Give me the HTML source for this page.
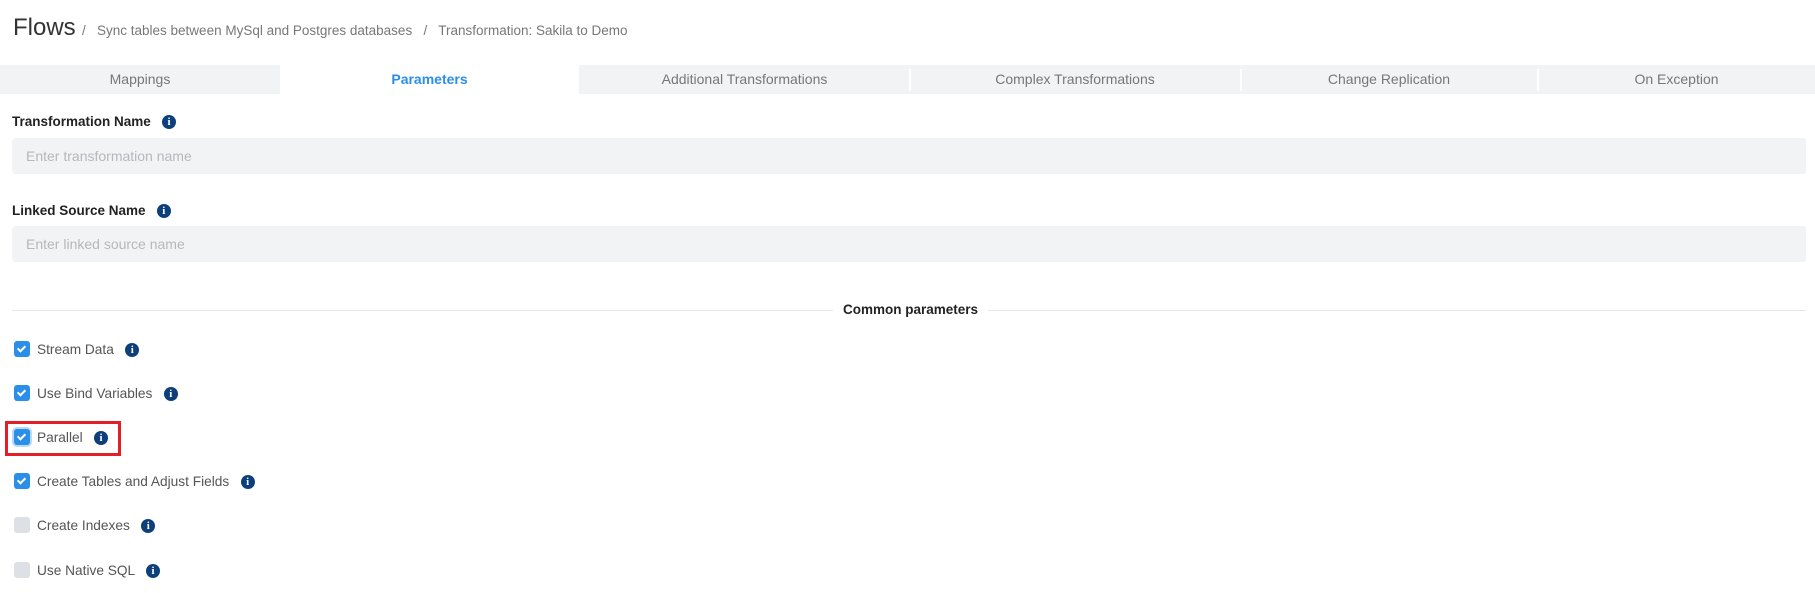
<!DOCTYPE html>
<html><head><meta charset="utf-8"><style>
*{box-sizing:border-box;margin:0;padding:0}
body{width:1815px;height:593px;background:#fff;font-family:"Liberation Sans",sans-serif;position:relative;overflow:hidden;color:#333}
.abs{position:absolute}
.title{left:13px;top:14px;font-size:24px;color:#333;font-weight:300}
.bc{top:23px;font-size:13.5px;color:#777}
.tabs{left:0;top:65px;width:1815px;height:29px;background:#f2f3f5}
.tab{position:absolute;top:0;height:29px;line-height:29px;text-align:center;font-size:14px;color:#777}
.sep{position:absolute;top:4px;width:2px;height:22px;background:#fff}
.lbl{font-size:13.5px;font-weight:bold;color:#222}
.inp{left:12px;width:1794px;height:36px;background:#f2f3f5;border-radius:3px;font-size:14px;color:#b5b8bd;padding-left:14px;line-height:36px}
.info{display:inline-block;width:14px;height:14px;border-radius:50%;background:#0d3f7a;color:#fff;font-size:11px;font-weight:bold;text-align:center;line-height:14px;font-family:"Liberation Serif",serif;vertical-align:1px}
.row{left:14px;height:18px;font-size:13.7px;color:#555;line-height:18px}
.cb{display:inline-block;width:16px;height:16px;border-radius:3px;vertical-align:-3px;margin-right:7px;position:relative}
.on{background:#2b8fe8}
.off{background:#dde0e4}
.on:after{content:"";position:absolute;left:5px;top:3px;width:3px;height:6px;border:solid #fff;border-width:0 2px 2px 0;transform:rotate(45deg)}
</style></head><body>
<div class="abs title">Flows</div>
<div class="abs bc" style="left:82px">/&nbsp;&nbsp; Sync tables between MySql and Postgres databases &nbsp;&nbsp;/&nbsp;&nbsp; Transformation: Sakila to Demo</div>
<div class="abs tabs">
<div class="tab" style="left:0;width:280px">Mappings</div>
<div class="tab" style="left:280px;width:299px;background:#fff;color:#2b8fe8;font-weight:bold">Parameters</div>
<div class="tab" style="left:579px;width:331px">Additional Transformations</div>
<div class="sep" style="left:909px"></div>
<div class="tab" style="left:910px;width:330px">Complex Transformations</div>
<div class="sep" style="left:1240px"></div>
<div class="tab" style="left:1241px;width:296px">Change Replication</div>
<div class="sep" style="left:1537px"></div>
<div class="tab" style="left:1538px;width:277px">On Exception</div>
</div>
<div class="abs lbl" style="left:12px;top:114px">Transformation Name &nbsp;&nbsp;<span class="info">i</span></div>
<div class="abs inp" style="top:138px">Enter transformation name</div>
<div class="abs lbl" style="left:12px;top:203px">Linked Source Name &nbsp;&nbsp;<span class="info">i</span></div>
<div class="abs inp" style="top:226px">Enter linked source name</div>
<div class="abs" style="left:12px;top:310px;width:1794px;height:1px;background:#e6e7e9"></div>
<div class="abs lbl" style="left:833px;top:302px;background:#fff;padding:0 10px">Common parameters</div>
<div class="abs row" style="top:341px"><span class="cb on"></span>Stream Data &nbsp;&nbsp;<span class="info">i</span></div>
<div class="abs row" style="top:385px"><span class="cb on"></span>Use Bind Variables &nbsp;&nbsp;<span class="info">i</span></div>
<div class="abs row" style="top:429px"><span class="cb on" style="box-shadow:0 0 0 2px #b8dafc"></span>Parallel &nbsp;&nbsp;<span class="info">i</span></div>
<div class="abs" style="left:5px;top:421px;width:116px;height:35px;border:3px solid #e41e26"></div>
<div class="abs row" style="top:473px"><span class="cb on"></span>Create Tables and Adjust Fields &nbsp;&nbsp;<span class="info">i</span></div>
<div class="abs row" style="top:517px"><span class="cb off"></span>Create Indexes &nbsp;&nbsp;<span class="info">i</span></div>
<div class="abs row" style="top:562px"><span class="cb off"></span>Use Native SQL &nbsp;&nbsp;<span class="info">i</span></div>
</body></html>
